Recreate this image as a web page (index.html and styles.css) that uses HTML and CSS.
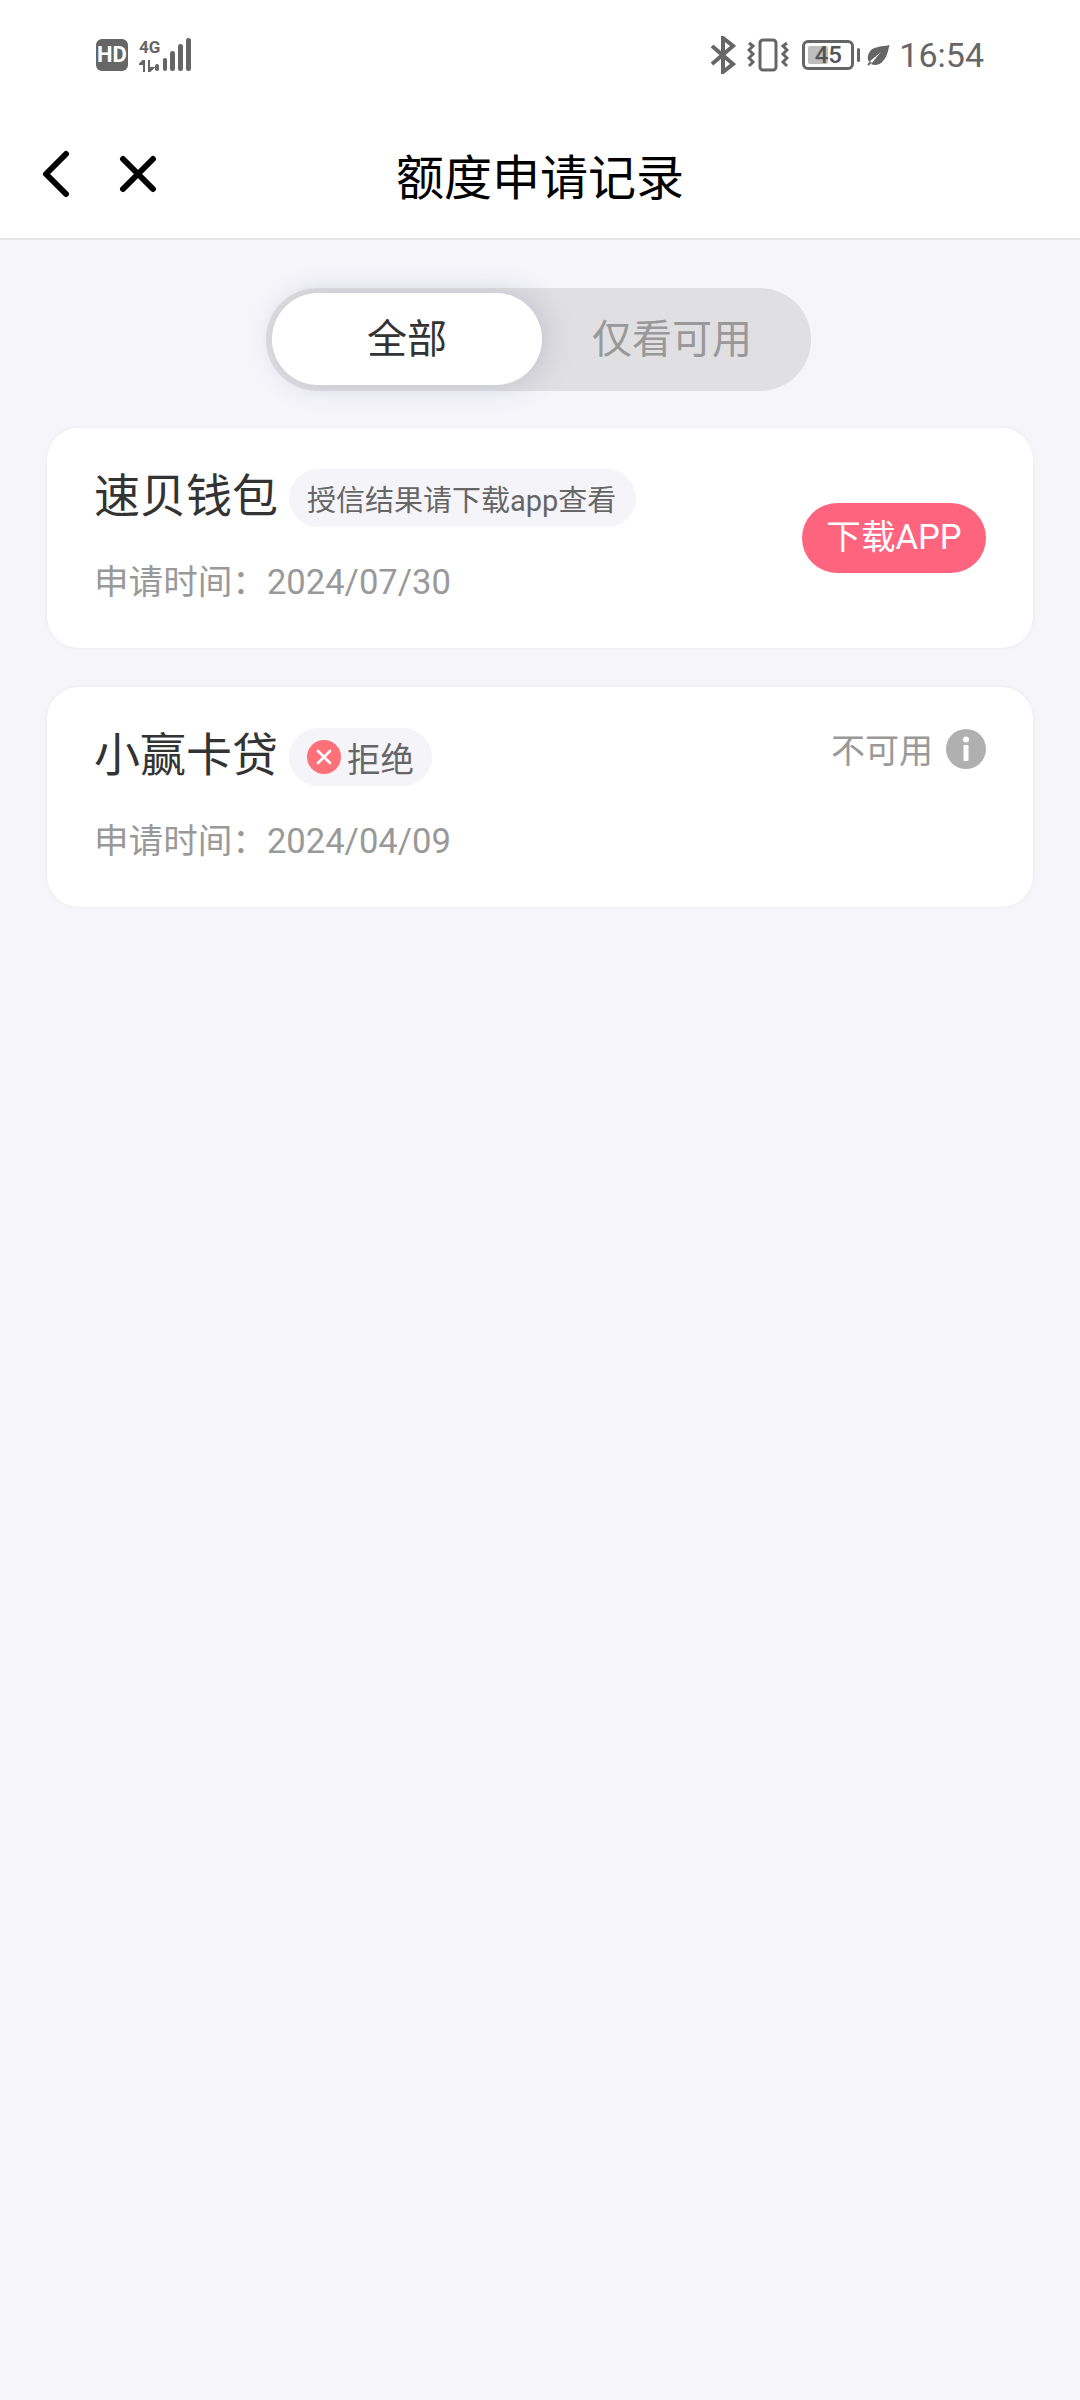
FILE: index.html
```html
<html>
  <head>
    <meta charset="utf-8">
    <link rel="stylesheet" href="styles.css">
  </head>

  <body>
    <div class="top">
      <div class="status">
        <div class="status-left">
          <span class="hd">HD</span>
          <div class="net">
            <span class="net-type">4G</span>
            <svg class="net-arrows" width="17" height="12" viewBox="0 0 17 12">
              <path d="M5 0v12M1 4l4-4v4zM10 0v12M14 8l-4 4V8z" fill="#666" stroke="#666" stroke-width="2"/>
            </svg>
          </div>
          <svg class="signal" width="36" height="34" viewBox="0 0 36 34">
            <rect x="0" y="26" width="4" height="7" rx="2"/>
            <rect x="8" y="20" width="4" height="13" rx="2"/>
            <rect x="15" y="13" width="5" height="20" rx="2.5"/>
            <rect x="23" y="6" width="5" height="27" rx="2.5"/>
            <rect x="31" y="0" width="5" height="33" rx="2.5"/>
          </svg>
        </div>
        <div class="status-right">
          <svg width="26" height="38" viewBox="0 0 26 38">
            <path d="M2 10l21 18-10 8V2l10 8L2 28" fill="none" stroke="#666" stroke-width="4"/>
          </svg>
          <svg class="vibrate" width="42" height="34" viewBox="0 0 42 34">
            <rect x="13" y="2" width="16" height="30" rx="3" fill="none" stroke="#666" stroke-width="3"/>
            <path d="M2 5l4 3-4 4 4 4-4 4 4 4-4 4M40 5l-4 3 4 4-4 4 4 4-4 4 4 4" fill="none" stroke="#666" stroke-width="3"/>
          </svg>
          <div class="battery">
            <div class="battery-fill"></div>
            <span class="battery-num">45</span>
          </div>
          <div class="battery-nib"></div>
          <svg class="leaf" width="23" height="21" viewBox="0 0 23 21">
            <path d="M22.5 0C14 2 5 1 2 8c-2 4-1 7 0 9L14 7 4 19c4 2 9 1 12-3 4-4 5-10 6.500-16z" fill="#666"/>
            <path d="M4 17l-3 3" fill="none" stroke="#666" stroke-width="2"/>
          </svg>
          <span class="clock">16:54</span>
        </div>
      </div>

      <div class="nav">
        <div class="nav-icons">
          <svg width="30" height="48" viewBox="0 0 30 48">
            <path d="M26 4L6 24l20 20" fill="none" stroke="#000" stroke-width="6" stroke-linecap="round" stroke-linejoin="round"/>
          </svg>
          <svg width="38" height="38" viewBox="0 0 38 38">
            <path d="M4 4l30 30M34 4L4 34" fill="none" stroke="#000" stroke-width="6" stroke-linecap="round"/>
          </svg>
        </div>
        <h1>额度申请记录</h1>
      </div>
    </div>

    <div class="toggle">
      <div class="toggle-item active">全部</div>
      <div class="toggle-item">仅看可用</div>
    </div>

    <div class="list">
      <div class="card">
        <div class="card-main">
          <div class="title-row">
            <span class="name">速贝钱包</span>
            <span class="tag tag-small">授信结果请下载app查看</span>
          </div>
          <div class="date">申请时间：2024/07/30</div>
        </div>
        <div class="download">下载APP</div>
      </div>

      <div class="card">
        <div class="card-main">
          <div class="title-row">
            <span class="name">小赢卡贷</span>
            <span class="tag">
              <svg width="34" height="34" viewBox="0 0 34 34">
                <circle cx="17" cy="17" r="17" fill="#ff7079"/>
                <path d="M11 11l12 12M23 11L11 23" fill="none" stroke="#fff" stroke-width="2.600" stroke-linecap="round"/>
              </svg>
              拒绝
            </span>
          </div>
          <div class="date">申请时间：2024/04/09</div>
        </div>
        <div class="unavailable">
          <span>不可用</span>
          <svg width="40" height="40" viewBox="0 0 40 40">
            <circle cx="20" cy="20" r="20" fill="#b0b0b0"/>
            <circle cx="20" cy="10.5" r="3" fill="#fff"/>
            <rect x="17.5" y="16" width="5" height="16" rx="1" fill="#fff"/>
          </svg>
        </div>
      </div>
    </div>
  </body>
</html>
```

FILE: styles.css
```css
* {
  box-sizing: border-box;
  margin: 0;
  padding: 0;
}

html,
body {
  height: 100%;
}

body {
  background-color: #f5f5fa;
  color: #333;
  font-family: Roboto, "Noto Sans CJK SC", sans-serif;
}

/* status bar + title */
.top {
  background-color: #fff;
  border-bottom: 2px solid #e6e6ea;
  height: 240px;
}

.status {
  align-items: center;
  color: #666;
  display: flex;
  height: 110px;
  justify-content: space-between;
  padding: 0 96px;
}

.status-left,
.status-right {
  align-items: center;
  display: flex;
}

.hd {
  background-color: #666;
  border-radius: 6px;
  color: #fff;
  font-size: 22px;
  font-weight: 700;
  height: 32px;
  line-height: 32px;
  text-align: center;
  width: 32px;
}

.net {
  display: flex;
  flex-direction: column;
  margin-left: 11px;
  width: 19px;
}

.net-type {
  font-family: "Liberation Sans Narrow", Roboto, sans-serif;
  font-size: 17px;
  font-weight: 700;
  line-height: 17px;
}

.net-arrows {
  margin-top: 4px;
}

.signal {
  align-self: flex-end;
  fill: #666;
  margin-left: -3px;
}

.vibrate {
  margin-left: 11px;
}

.battery {
  border: 3px solid #666;
  border-radius: 6px;
  height: 30px;
  margin-left: 13px;
  position: relative;
  width: 52px;
}

.battery-fill {
  background-color: #bdbdbd;
  border-radius: 2px;
  height: 18px;
  margin: 3px;
  width: 20px;
}

.battery-num {
  color: #555;
  font-size: 24px;
  font-weight: 500;
  left: 0;
  line-height: 24px;
  position: absolute;
  text-align: center;
  top: 0;
  width: 100%;
}

.battery-nib {
  background-color: #666;
  border-radius: 2px;
  height: 14px;
  margin-left: 3px;
  width: 3px;
}

.leaf {
  margin-left: 7px;
}

.clock {
  font-size: 34px;
  margin-left: 9px;
}

.nav {
  align-items: center;
  display: flex;
  height: 128px;
  justify-content: center;
  position: relative;
}

.nav-icons {
  align-items: center;
  bottom: 0;
  display: flex;
  gap: 49px;
  left: 40px;
  position: absolute;
  top: 0;
}

h1 {
  color: #000;
  font-size: 48px;
  font-weight: 400;
}

/* toggle */
.toggle {
  background-color: #e0e0e3;
  border-radius: 51px;
  display: flex;
  height: 103px;
  margin: 48px 0 0 266px;
  padding: 5px 6px 6px;
  width: 545px;
}

.toggle-item {
  align-items: center;
  border-radius: 46px;
  color: #999;
  display: flex;
  flex: 1;
  font-size: 40px;
  justify-content: center;
  padding: 0 3px 6px 0;
}

.toggle-item.active {
  background-color: #fff;
  box-shadow: 4px 0 26px 2px rgba(120, 120, 150, 0.26);
  color: #333;
  flex: none;
  padding-right: 0;
  width: 270px;
}

/* cards */
.list {
  display: flex;
  flex-direction: column;
  gap: 39px;
  margin: 37px 47px 0;
}

.card {
  align-items: center;
  background-color: #fff;
  border-radius: 32px;
  box-shadow: 0 0 3px 1px #eeeef3;
  display: flex;
  height: 220px;
  justify-content: space-between;
  padding: 0 47px;
}

.card-main {
  align-self: flex-start;
  display: flex;
  flex-direction: column;
  padding-top: 37px;
}

.title-row {
  align-items: center;
  display: flex;
}

.name {
  font-size: 46px;
  line-height: 58px;
}

.tag {
  align-items: center;
  background-color: #f5f5f9;
  border-radius: 29px;
  color: #666;
  display: flex;
  font-size: 33.6px;
  gap: 6px;
  height: 58px;
  margin: 4px 0 0 11px;
  padding: 0 18px;
}

.tag-small {
  font-size: 29px;
  padding-right: 20px;
}

.date {
  color: #999;
  font-size: 34.6px;
  line-height: 44px;
  margin-top: 33px;
}

.download {
  background-color: #ff647f;
  border-radius: 35px;
  color: #fff;
  font-size: 34.6px;
  height: 70px;
  line-height: 68px;
  text-align: center;
  width: 184px;
}

.unavailable {
  align-items: center;
  align-self: flex-start;
  color: #999;
  display: flex;
  font-size: 34px;
  gap: 13px;
  padding-top: 37px;
}
```
